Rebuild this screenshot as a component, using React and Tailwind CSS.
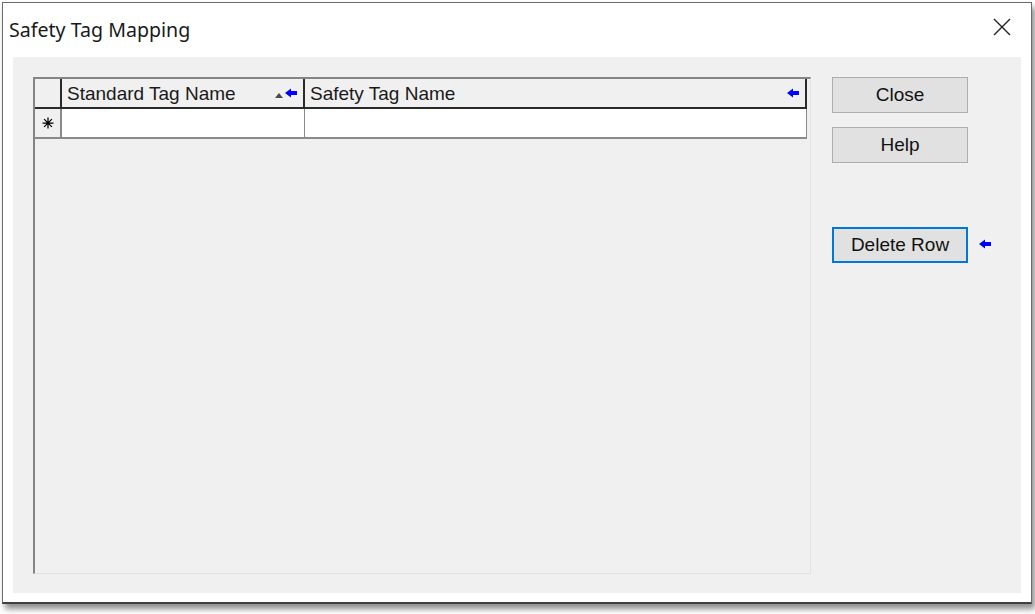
import React from "react";

const BlueArrow = ({ className = "" }) => (
  <svg width="12" height="10" viewBox="0 0 12 10" className={className}>
    <path d="M0 5 L6 0.5 L6 3 L12 3 L12 7 L6 7 L6 9.5 Z" fill="#0000ff" />
  </svg>
);

const SortUp = () => (
  <svg width="8" height="5" viewBox="0 0 8 5" className="mr-[2px] mt-[4px]">
    <path d="M0 5 L4 0 L8 5 Z" fill="#4b4b4b" />
  </svg>
);

const NewRowStar = () => (
  <svg width="12" height="12" viewBox="0 0 12 12" className="-mt-[1px]">
    <path
      d="M6 0.5 V11.5 M0.5 6 H11.5 M2.1 2.1 L9.9 9.9 M9.9 2.1 L2.1 9.9"
      stroke="#000"
      strokeWidth="1.25"
    />
  </svg>
);

const DlgButton = ({ children, focused }) => (
  <button
    className={
      "w-[136px] h-[36px] bg-[#e1e1e1] text-[19px] text-[#111] " +
      (focused ? "border-2 border-[#0078d7]" : "border border-[#adadad]")
    }
  >
    {children}
  </button>
);

export default function App() {
  return (
    <div
      className="w-[1035px] h-[614px] bg-white pt-[2px] pl-[2px]"
      style={{ fontFamily: '"Liberation Sans", Arial, sans-serif' }}
    >
      <div className="w-[1030px] h-[602px] bg-white border border-[#6b6b6b] border-b-2 border-b-[#404040] shadow-[3px_5px_6px_rgba(0,0,0,0.45)] flex flex-col">
        {/* title bar */}
        <div className="h-[54px] flex items-start justify-between">
          <div
            className="pl-[6px] pt-[12px] text-[19.6px] text-[#1a1a1a]"
            style={{ fontFamily: '"Noto Sans", "Open Sans", sans-serif' }}
          >
            Safety Tag Mapping
          </div>
          <svg width="20" height="20" viewBox="0 0 20 20" className="mt-[14px] mr-[19px]">
            <path d="M2 2 L18 18 M18 2 L2 18" stroke="#222" strokeWidth="1.4" />
          </svg>
        </div>

        {/* client area */}
        <div className="mx-[10px] mb-[9px] flex-1 bg-[#f0f0f0] pl-[20px] pt-[20px] flex gap-[21px]">
          {/* grid */}
          <div className="w-[778px] h-[497px] border-t-2 border-l-2 border-[#858585] border-r border-b border-r-[#e2e2e2] border-b-[#e2e2e2] flex flex-col">
            <div className="w-[772px]">
              {/* header row */}
              <div className="flex h-[30px] border-b-2 border-[#2a2a2a] bg-[#f0f0f0]">
                <div className="w-[27px] border-r-2 border-[#2a2a2a]" />
                <div className="w-[243px] border-r-2 border-[#2a2a2a] flex items-center justify-between pl-[5px] pr-[6px] pt-[3px] text-[19px] text-[#1a1a1a]">
                  <span>Standard Tag Name</span>
                  <span className="flex items-center -mt-[3px]">
                    <SortUp />
                    <BlueArrow />
                  </span>
                </div>
                <div className="flex-1 border-r-2 border-[#2a2a2a] flex items-center justify-between pl-[5px] pr-[6px] pt-[3px] text-[19px] text-[#1a1a1a]">
                  <span>Safety Tag Name</span>
                  <BlueArrow className="-mt-[3px]" />
                </div>
              </div>
              {/* new row */}
              <div className="flex h-[30px] border-b-2 border-[#8a8a8a] bg-white">
                <div className="w-[27px] bg-[#f0f0f0] border-r-2 border-[#8a8a8a] flex items-center justify-center">
                  <NewRowStar />
                </div>
                <div className="w-[243px] border-r border-[#8a8a8a]" />
                <div className="flex-1 border-r border-[#8a8a8a]" />
              </div>
            </div>
          </div>

          {/* buttons */}
          <div className="flex flex-col">
            <DlgButton>Close</DlgButton>
            <div className="h-[14px]" />
            <DlgButton>Help</DlgButton>
            <div className="h-[64px]" />
            <div className="flex items-center gap-[11px]">
              <DlgButton focused>Delete Row</DlgButton>
              <BlueArrow className="-mt-[3px]" />
            </div>
          </div>
        </div>
      </div>
    </div>
  );
}
